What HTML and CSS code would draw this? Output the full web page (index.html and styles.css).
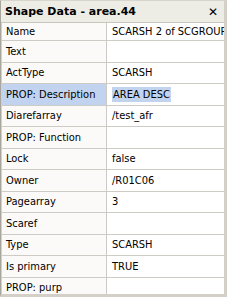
FILE: index.html
```html
<!DOCTYPE html>
<html lang="en">
<head>
<meta charset="UTF-8">
<title>Shape Data</title>
<link rel="stylesheet" href="styles.css">
</head>
<body>
<div class="panel">
    <div class="panel-head">
        <span class="title">Shape Data - area.44</span>
        <span class="close">&#x2715;</span>
    </div>
    <div class="grid">
        <div class="row first"><div class="key">Name</div><div class="val">SCARSH 2 of SCGROUP</div></div>
        <div class="row"><div class="key">Text</div><div class="val"></div></div>
        <div class="row"><div class="key">ActType</div><div class="val">SCARSH</div></div>
        <div class="row active"><div class="key">PROP: Description</div><div class="val"><span class="sel">AREA DESC</span></div></div>
        <div class="row"><div class="key">Diarefarray</div><div class="val">/test_afr</div></div>
        <div class="row"><div class="key">PROP: Function</div><div class="val"></div></div>
        <div class="row"><div class="key">Lock</div><div class="val">false</div></div>
        <div class="row"><div class="key">Owner</div><div class="val">/R01C06</div></div>
        <div class="row"><div class="key">Pagearray</div><div class="val">3</div></div>
        <div class="row"><div class="key">Scaref</div><div class="val"></div></div>
        <div class="row"><div class="key">Type</div><div class="val">SCARSH</div></div>
        <div class="row"><div class="key">Is primary</div><div class="val">TRUE</div></div>
        <div class="row"><div class="key">PROP: purp</div><div class="val"></div></div>
    </div>
</div>
</body>
</html>
```

FILE: styles.css
```css
body {
    margin: 0;
    font-family: "DejaVu Sans Condensed", "DejaVu Sans", sans-serif;
    font-size: 11px;
    color: #000;
}
.panel {
    width: 227px;
    height: 297px;
    box-sizing: border-box;
    border: 1px solid #a8a69c;
    border-top-color: #d8d6cc;
    border-right: 3px solid #d4d0c8;
    border-bottom: 3px solid #d4d0c8;
    background: #d4d0c8;
    overflow: hidden;
    display: flex;
    flex-direction: column;
}
.panel-head {
    height: 21px;
    flex: none;
    background: #edece5;
    border-bottom: 1px solid #c9c7bd;
    display: flex;
    align-items: center;
    justify-content: space-between;
    padding: 0 6px 0 4px;
}
.title {
    font-family: "DejaVu Sans", sans-serif;
    font-weight: bold;
    font-size: 11px;
}
.close {
    font-family: "DejaVu Sans", sans-serif;
    font-weight: bold;
    font-size: 12px;
}
.grid {
    flex: 1;
    overflow: hidden;
    background: #fff;
    border-left: 1px solid #d4d0c8;
}
.row {
    display: flex;
    height: 21.5px;
    box-sizing: border-box;
    border-bottom: 1px solid #cdcbc3;
}
.row.first {
    height: 18px;
}
.key {
    width: 105px;
    flex: none;
    box-sizing: border-box;
    padding-left: 4px;
    background: #fcfaf8;
    border-right: 1px solid #cdcbc3;
    display: flex;
    align-items: center;
    white-space: nowrap;
}
.val {
    flex: 1;
    padding-left: 5px;
    display: flex;
    align-items: center;
    white-space: nowrap;
    overflow: hidden;
}
.row.active .key {
    background: #c2d3ef;
}
.sel {
    background: #c2d3ef;
    padding: 1px 1px;
}
```
